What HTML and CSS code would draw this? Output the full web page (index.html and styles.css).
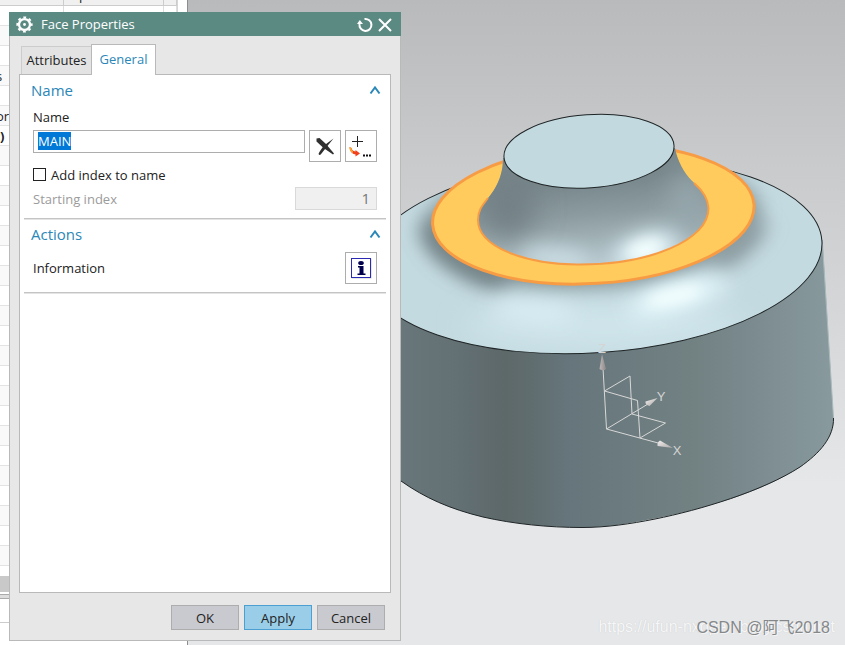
FILE: index.html
```html
<!DOCTYPE html>
<html lang="en">
<head>
  <meta charset="UTF-8">
  <meta name="viewport" content="width=device-width, initial-scale=1.0">
  <title>Face Properties</title>
  <link rel="stylesheet" href="styles.css">
</head>
<body>
  <div class="workspace">
    <aside class="navigator">
      <table class="tree">
        <colgroup><col class="col-name"><col class="col-mid"><col></colgroup>
        <thead>
          <tr><th></th><th>p</th><th></th></tr>
        </thead>
        <tbody>
          <tr><td></td><td></td><td></td></tr>
          <tr><td></td><td></td><td></td></tr>
          <tr><td></td><td></td><td></td></tr>
          <tr><td class="cut">s</td><td></td><td></td></tr>
          <tr><td></td><td></td><td></td></tr>
          <tr><td class="cut">ore</td><td></td><td></td></tr>
          <tr><td class="strong">)</td><td></td><td></td></tr>
          <tr><td></td><td></td><td></td></tr>
          <tr><td></td><td></td><td></td></tr>
          <tr><td></td><td></td><td></td></tr>
          <tr><td></td><td></td><td></td></tr>
          <tr><td></td><td></td><td></td></tr>
          <tr><td></td><td></td><td></td></tr>
          <tr><td></td><td></td><td></td></tr>
          <tr><td></td><td></td><td></td></tr>
          <tr><td></td><td></td><td></td></tr>
          <tr><td></td><td></td><td></td></tr>
          <tr><td></td><td></td><td></td></tr>
          <tr><td></td><td></td><td></td></tr>
          <tr><td></td><td></td><td></td></tr>
          <tr><td></td><td></td><td></td></tr>
          <tr><td></td><td></td><td></td></tr>
          <tr><td></td><td></td><td></td></tr>
          <tr><td></td><td></td><td></td></tr>
          <tr><td></td><td></td><td></td></tr>
          <tr><td></td><td></td><td></td></tr>
          <tr><td></td><td></td><td></td></tr>
          <tr><td></td><td></td><td></td></tr>
        </tbody>
      </table>
      <div class="scroll-track"></div>
      <div class="splitter"></div>
      <div class="pane-row"></div>
    </aside>

    <main class="viewport">
      <svg class="model" viewBox="188 0 657 645" preserveAspectRatio="xMidYMid meet" role="img" aria-label="Part model">
        <defs>
          <linearGradient id="side" gradientUnits="userSpaceOnUse" x1="401" y1="0" x2="834" y2="0">
            <stop offset="0" stop-color="#68777b"/>
            <stop offset="0.13" stop-color="#637074"/>
            <stop offset="0.24" stop-color="#5d6869"/>
            <stop offset="0.3" stop-color="#606d6f"/>
            <stop offset="0.38" stop-color="#66757b"/>
            <stop offset="0.52" stop-color="#6c7b7f"/>
            <stop offset="0.68" stop-color="#728182"/>
            <stop offset="0.82" stop-color="#7c8b90"/>
            <stop offset="1" stop-color="#889a9e"/>
          </linearGradient>
          <linearGradient id="neck" gradientUnits="userSpaceOnUse" x1="590" y1="180" x2="598" y2="265">
            <stop offset="0" stop-color="#77868a"/>
            <stop offset="0.4" stop-color="#8c9b9f"/>
            <stop offset="1" stop-color="#b6c8ce"/>
          </linearGradient>
          <filter id="blur7" x="-60%" y="-100%" width="220%" height="300%"><feGaussianBlur stdDeviation="7"/></filter>
          <filter id="blur10" x="-60%" y="-100%" width="220%" height="300%"><feGaussianBlur stdDeviation="10"/></filter>
          <filter id="blur14" x="-60%" y="-100%" width="220%" height="300%"><feGaussianBlur stdDeviation="14"/></filter>
          <clipPath id="rimClip"><ellipse cx="594" cy="256" rx="228.4" ry="96.8" transform="rotate(-3.8 594 256)"/></clipPath>
          <clipPath id="neckClip"><path d="M503 158 C503 170 500 180 494 190 C488 200 478 206 478 220 C478 247 525 264 577 264.500 C650 265 709 240 708.500 208 C708 196 700 188 692 181 C684 173 677 160 675 148 Z"/></clipPath>
          <linearGradient id="cone" x1="0" y1="0" x2="1" y2="1">
            <stop offset="0" stop-color="#f4f2f1"/>
            <stop offset="1" stop-color="#a9a4a3"/>
          </linearGradient>
          <linearGradient id="coneDark" x1="0" y1="0" x2="1" y2="0">
            <stop offset="0" stop-color="#bdb8b7"/>
            <stop offset="1" stop-color="#8d8988"/>
          </linearGradient>
        </defs>

        <!-- side wall -->
        <path fill="url(#side)" d="M380 240 H822.500 L833.500 418 C834 437 820 453 800 467 C767 489 718 505 667 516 C637 522 610 527.500 582 527.500 C548 527.500 514 524 483 517 C450 509 425 498 401 481 L380 464 Z"/>
        <path class="edge" d="M833.500 418 C834 437 820 453 800 467 C763 491 700 510 655 519 C630 524 606 527.500 582 527.500 C548 527.500 514 524 483 517 C450 509 425 498 401 481 L380 464"/>
        <path class="edge-soft" d="M822.500 244 L833.500 418"/>

        <!-- shoulder -->
        <g clip-path="url(#rimClip)">
          <rect x="360" y="140" width="480" height="230" fill="#c3dae0"/>
          <ellipse cx="592" cy="222" rx="168" ry="67" transform="rotate(-3.500 592 222)" fill="#7f9094" filter="url(#blur10)"/>
          <ellipse cx="465" cy="255" rx="52" ry="18" transform="rotate(36 465 255)" fill="#758488" filter="url(#blur10)"/>
          <ellipse cx="738" cy="245" rx="36" ry="12" transform="rotate(-42 738 245)" fill="#8c9ca1" filter="url(#blur10)"/>
          <ellipse cx="605" cy="326" rx="140" ry="22" fill="#cfe5eb" filter="url(#blur14)"/>
          <ellipse cx="533" cy="311" rx="42" ry="9" transform="rotate(5 533 311)" fill="#dcf0f6" filter="url(#blur10)"/>
          <ellipse cx="678" cy="297" rx="54" ry="15" transform="rotate(-17 678 297)" fill="#dff3f8" filter="url(#blur10)"/>
          <ellipse cx="674" cy="296" rx="30" ry="8" transform="rotate(-14 674 296)" fill="#f4ffff" filter="url(#blur7)"/>
        </g>
        <ellipse class="edge" cx="594" cy="256" rx="228.400" ry="96.800" transform="rotate(-3.800 594 256)"/>

        <!-- selected face -->
        <ellipse class="face-selected" cx="593.300" cy="214.500" rx="161" ry="69" transform="rotate(-3.500 593.300 214.500)"/>

        <!-- neck -->
        <g clip-path="url(#neckClip)">
          <rect x="470" y="140" width="245" height="130" fill="url(#neck)"/>
          <ellipse cx="508" cy="205" rx="28" ry="34" fill="#738186" filter="url(#blur14)"/>
          <ellipse cx="688" cy="205" rx="18" ry="36" fill="#96a7ad" filter="url(#blur14)"/>
          <ellipse cx="556" cy="258" rx="36" ry="9" transform="rotate(6 556 258)" fill="#d2e5eb" filter="url(#blur10)"/>
          <ellipse cx="646" cy="250" rx="36" ry="17" transform="rotate(-18 646 250)" fill="#d5e8ee" filter="url(#blur10)"/>
          <ellipse cx="645" cy="250" rx="19" ry="10" transform="rotate(-18 645 250)" fill="#f4ffff" filter="url(#blur7)"/>
        </g>
        <path class="ring-inner" d="M488 198 C482 206 478 210 478 220 C478 247 525 264 577 264.500 C650 265 709 240 708.500 208 C708 198 702 190 694 183"/>

        <!-- top face -->
        <ellipse class="top-face" cx="589" cy="151.300" rx="85.200" ry="36.600" transform="rotate(-4 589 151.300)"/>

        <!-- coordinate triad -->
        <g class="triad">
          <path d="M606.500 429 L603 368 M606.500 429 L660 443.500 M606.500 429 L648 404 M604.500 391 L630 376 L632 414 L665.500 423 L640 438 L637.500 400.500 L604.500 391"/>
          <path class="cone cone-dark" d="M602 354 L606 369 Q603 371.500 599.500 369 Z"/>
          <path class="cone" d="M673 448 L657.500 446 Q657 442 660 440.500 Z"/>
          <path class="cone" d="M657.500 398 L649.500 406 Q645 405 645.500 401.500 Z"/>
          <text x="602" y="353">Z</text>
          <text x="661" y="401">Y</text>
          <text x="677" y="455">X</text>
        </g>
      </svg>
      <span class="mark-url">https://ufun-nxopen.blog.csdn.net</span>
      <span class="mark-author">CSDN @阿飞2018</span>
    </main>
  </div>

  <form class="dialog" role="dialog" aria-labelledby="dialogTitle" onsubmit="return false">
    <header class="title-bar">
      <svg class="gear" viewBox="0 0 18 18" aria-hidden="true">
        <circle cx="9" cy="9" r="5.800" fill="none" stroke="#fff" stroke-width="2.400"/>
        <circle cx="9" cy="9" r="7.600" fill="none" stroke="#fff" stroke-width="2" stroke-dasharray="3 2.969" stroke-dashoffset="1.500"/>
        <circle cx="9" cy="9" r="1.500" fill="#fff"/>
      </svg>
      <h1 id="dialogTitle">Face Properties</h1>
      <button class="title-btn" type="button" aria-label="Reset">
        <svg viewBox="0 0 18 18" width="18" height="18">
          <path d="M8.500 4 A6 6 0 1 1 3.500 9" fill="none" stroke="#fff" stroke-width="2"/>
          <path d="M1 9 L3.800 5 L7 9 Z" fill="#fff"/>
        </svg>
      </button>
      <button class="title-btn" type="button" aria-label="Close">
        <svg viewBox="0 0 18 18" width="18" height="18">
          <path d="M3 4 L15 16 M15 4 L3 16" stroke="#fff" stroke-width="2"/>
        </svg>
      </button>
    </header>

    <div class="tabs" role="tablist">
      <button class="tab" type="button" role="tab" aria-selected="false">Attributes</button>
      <button class="tab active" type="button" role="tab" aria-selected="true">General</button>
    </div>

    <div class="panel" role="tabpanel">
      <section class="group">
        <div class="group-head">
          <h2>Name</h2>
          <button class="collapse" type="button" aria-label="Collapse Name">
            <svg viewBox="0 0 12 10" width="12" height="10"><path d="M1.500 8.500 L6 2.500 L10.500 8.500" fill="none" stroke="#2b87b8" stroke-width="2"/></svg>
          </button>
        </div>
        <div class="group-body">
          <label class="field-label" for="nameInput">Name</label>
          <div class="name-row">
            <input class="text-input" type="text" id="nameInput" value="MAIN" autofocus>
            <button class="icon-btn" type="button" aria-label="Clear name">
              <svg viewBox="0 0 32 32" width="32" height="32">
                <path d="M7.500 8.500 L10.500 8 L17 14 L25 23.500 L24 24.500 L14.500 18 L7.500 11.500 Z" fill="#303030"/>
                <path d="M24.500 8.500 L18 16.500 L12.500 23.500 Q11 26 9.500 24 Q10 22 15 15.500 Z" fill="#303030"/>
              </svg>
            </button>
            <button class="icon-btn" type="button" aria-label="Name options">
              <svg viewBox="0 0 32 32" width="32" height="32">
                <path d="M12.500 6 V17 M7 11.500 H18" stroke="#222" stroke-width="1"/>
                <path d="M4.500 17 L6.500 18 Q7 21 10.500 21.500 L10.500 20 L15 23.500 L10.500 26.500 V24.500 Q5 24 4.500 17 Z" fill="#f0401c"/>
                <path d="M4.500 17 Q4 21 8 23 L8 21.500 Q6.500 20 6.500 18 Z" fill="#f9a82c"/>
                <path d="M18 24.500 h2 v2 h-2 Z M21 24.500 h2 v2 h-2 Z M24 24.500 h2 v2 h-2 Z" fill="#111"/>
              </svg>
            </button>
          </div>
          <div class="check-row">
            <input class="check" type="checkbox" id="addIndex">
            <label for="addIndex">Add index to name</label>
          </div>
          <div class="index-row">
            <label for="startIndex">Starting index</label>
            <input class="text-input index-input" type="text" id="startIndex" value="1" disabled>
          </div>
        </div>
      </section>

      <section class="group">
        <div class="group-head">
          <h2>Actions</h2>
          <button class="collapse" type="button" aria-label="Collapse Actions">
            <svg viewBox="0 0 12 10" width="12" height="10"><path d="M1.500 8.500 L6 2.500 L10.500 8.500" fill="none" stroke="#2b87b8" stroke-width="2"/></svg>
          </button>
        </div>
        <div class="group-body">
          <div class="info-row">
            <label for="infoBtn">Information</label>
            <button class="icon-btn" type="button" id="infoBtn">
              <svg viewBox="0 0 32 32" width="32" height="32">
                <rect x="6.500" y="6.500" width="20" height="20" fill="#d0d0d0"/>
                <rect x="6.500" y="6.500" width="19" height="19" fill="#fff" stroke="#2a2ab4"/>
                <ellipse cx="16" cy="11" rx="2.800" ry="2" fill="#00004c"/>
                <path d="M13 14 H18.500 V21.500 H20.500 V23 H12.500 V21.500 H14.500 V15.500 H13 Z" fill="#00004c"/>
              </svg>
            </button>
          </div>
        </div>
      </section>
    </div>

    <footer class="actions">
      <button class="btn" type="button">OK</button>
      <button class="btn btn-default" type="button">Apply</button>
      <button class="btn" type="button">Cancel</button>
    </footer>
  </form>

  <script>
    const nameInput = document.getElementById('nameInput');
    nameInput.focus();
    nameInput.select();
  </script>
</body>
</html>
```
FILE: styles.css
```css
:root {
  --title-color: #5b8a83;
  --dialog-color: #e7e7e7;
  --line-color: #b9b9b9;
  --accent-color: #2b87b8;
  --text-color: #222;
}

* {
  box-sizing: border-box;
  margin: 0;
  padding: 0;
}

body {
  position: relative;
  height: 100vh;
  overflow: hidden;
  font-family: "Open Sans", "Noto Sans CJK SC", sans-serif;
  font-size: 13px;
  line-height: 18px;
  color: var(--text-color);
}

button,
input {
  font: inherit;
  color: inherit;
}

.workspace {
  display: flex;
  height: 100%;
}

/* Part navigator behind the dialog */
.navigator {
  flex: 0 0 188px;
  display: flex;
  flex-direction: column;
  overflow: hidden;
  background: #fff;
  border-right: 1px solid #8b8d90;
}

.tree {
  width: 178px;
  flex: none;
  table-layout: fixed;
  border-collapse: separate;
  border-spacing: 0;
  border-right: 1px solid #d5d5d5;
  margin-top: -15px;
}

.col-name {
  width: 64px;
}

.col-mid {
  width: 100px;
}

.tree th,
.tree td {
  height: 20px;
  line-height: 18px;
  border-right: 1px solid #ddd;
  border-bottom: 1px solid #e3e3e3;
  text-align: left;
  white-space: nowrap;
  overflow: hidden;
}

.tree th {
  height: 21px;
  padding-left: 15px;
  background: #f0f0f0;
  border-color: #ccc;
  font-weight: 400;
}

.tree tbody tr:nth-child(even) {
  background: #f9f9f9;
}

.tree .cut {
  text-indent: -4px;
}

.tree .strong {
  font-weight: 700;
}

.scroll-track {
  height: 16px;
  margin-top: 10px;
  background: #c9c9c9;
}

.splitter {
  height: 5px;
  margin-top: 2px;
  background: #ddd;
  border-top: 1px solid #aaa;
  border-bottom: 1px solid #aaa;
}

.pane-row {
  height: 24px;
  border-bottom: 1px solid #ccc;
}

/* Graphics window */
.viewport {
  position: relative;
  flex: 1;
  min-width: 0;
  background: linear-gradient(#b9babc 0%, #c9cacc 25%, #d9dadc 55%, #e6e7e9 75%, #e6e7e9 100%);
}

.model {
  display: block;
  width: 100%;
  height: 100%;
}

.edge {
  fill: none;
  stroke: #1f2526;
  stroke-width: 1;
}

.edge-soft {
  fill: none;
  stroke: #a9b9bd;
  stroke-width: 1;
}

.face-selected {
  fill: #ffcb5c;
  stroke: #f79c45;
  stroke-width: 3;
}

.ring-inner {
  fill: none;
  stroke: #f79c45;
  stroke-width: 2;
}

.top-face {
  fill: #c2d9df;
  stroke: #1f2526;
  stroke-width: 1;
}

.triad path {
  fill: none;
  stroke: #d8d8d8;
  stroke-width: 1;
}

.triad .cone {
  fill: url(#cone);
  stroke: none;
}

.triad .cone-dark {
  fill: url(#coneDark);
}

.triad text {
  fill: #d4d4d4;
  font-family: "Liberation Sans", sans-serif;
  font-size: 13px;
  text-anchor: middle;
}

.mark-url,
.mark-author {
  position: absolute;
  bottom: 8px;
  white-space: nowrap;
  font-family: "Liberation Sans", "Noto Sans CJK SC", sans-serif;
  font-size: 16px;
  line-height: 20px;
}

.mark-url {
  right: 10px;
  color: #f6f7f8;
  text-shadow: 0 0 1px #c4c5c7;
}

.mark-author {
  right: 15px;
  bottom: 7px;
  color: #85888b;
  text-shadow: 1px 1px 0 #f4f4f4;
}

/* Dialog window */
.dialog {
  position: absolute;
  left: 9px;
  top: 12px;
  bottom: 4px;
  width: 392px;
  display: flex;
  flex-direction: column;
  background: var(--dialog-color);
  border: 1px solid var(--line-color);
  border-top: 0;
}

.title-bar {
  display: flex;
  align-items: center;
  height: 24px;
  margin: 0 -1px;
  padding: 0 7px;
  background: var(--title-color);
  color: #fff;
}

.gear {
  width: 17px;
  height: 17px;
  margin-right: 8px;
  overflow: visible;
}

.title-bar h1 {
  flex: 1;
  font-size: 13px;
  font-weight: 400;
}

.title-btn {
  display: flex;
  width: 18px;
  height: 18px;
  margin-left: 2px;
  background: none;
  border: 0;
}

.tabs {
  display: flex;
  align-items: flex-end;
  padding: 8px 11px 0;
}

.tab {
  height: 28px;
  width: 70px;
  padding-bottom: 2px;
  background: #e3e3e3;
  border: 1px solid #ccc;
  border-width: 1px 0 0 1px;
}

.tab.active {
  position: relative;
  width: 65px;
  height: 31px;
  margin-bottom: -1px;
  background: #fff;
  border-color: var(--line-color);
  border-width: 1px 1px 0;
  color: var(--accent-color);
}

.panel {
  flex: 1;
  margin: 0 9px;
  padding: 0 4px;
  background: #fff;
  border: 1px solid var(--line-color);
}

.group {
  padding-bottom: 8px;
  border-bottom: 1px solid #c4c4c4;
  box-shadow: 0 1px 0 #e4e4e4;
}

.group-head {
  display: flex;
  align-items: center;
  justify-content: space-between;
  height: 29px;
  padding: 0 5px 0 7px;
}

.group-head h2 {
  font-size: 15px;
  font-weight: 400;
  color: var(--accent-color);
}

.collapse {
  display: flex;
  background: none;
  border: 0;
}

.group-body {
  padding: 4px 9px 0;
}

.field-label {
  display: block;
  margin-bottom: 4px;
}

.name-row {
  display: flex;
  align-items: flex-start;
  gap: 4px;
}

.text-input {
  flex: 1;
  min-width: 0;
  height: 23px;
  padding: 0 4px 1px;
  background: #fff;
  border: 1px solid #adadad;
  outline: none;
}

.text-input::selection {
  background: #0078d7;
  color: #fff;
}

.icon-btn {
  display: flex;
  align-items: center;
  justify-content: center;
  width: 32px;
  height: 32px;
  background: #fff;
  border: 1px solid #adadad;
}

.icon-btn svg {
  flex: none;
}

.check-row {
  display: flex;
  align-items: center;
  gap: 5px;
  height: 25px;
}

.check {
  appearance: none;
  width: 13px;
  height: 13px;
  background: #fff;
  border: 1px solid #222;
}

.index-row,
.info-row {
  display: flex;
  align-items: center;
  justify-content: space-between;
}

.index-row {
  color: #9b9b9b;
}

.index-input {
  flex: 0 0 82px;
  padding-right: 6px;
  background: #f0f0f0;
  border-color: #d9d9d9;
  color: #777;
  font-size: 15px;
  text-align: right;
}

.actions {
  display: flex;
  justify-content: flex-end;
  gap: 5px;
  padding: 12px 15px 10px;
}

.btn {
  width: 68px;
  height: 25px;
  background: #c9cacf;
  border: 1px solid #adadad;
}

.btn-default {
  background: #9acde7;
  border-color: #4b9fd1;
}
```
